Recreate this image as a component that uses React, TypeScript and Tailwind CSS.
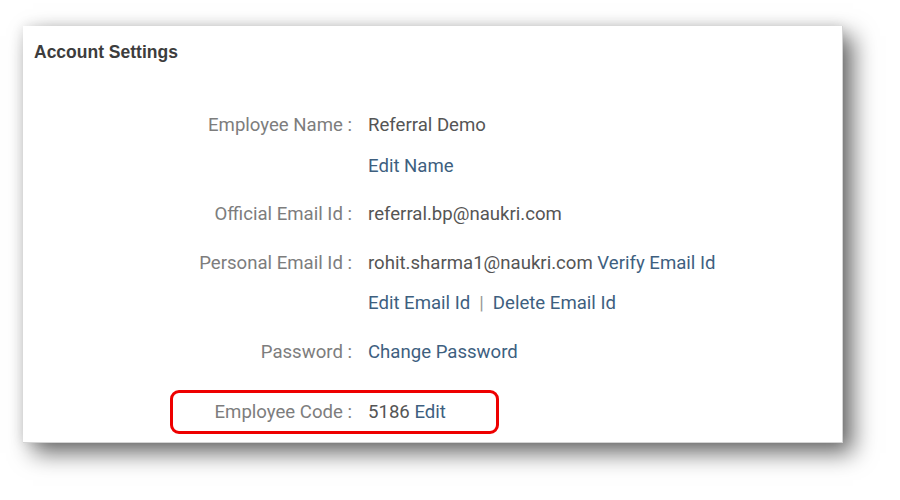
const rowLabel = 'text-right text-[#7d7d7d]';
const link = 'text-[#3e5f7f]';

function Row({ label, children }: { label?: string; children: React.ReactNode }) {
  return (
    <div className="grid h-[40px] grid-cols-[329px_1fr] items-center gap-4">
      <span className={rowLabel}>{label ?? ''}</span>
      <span className="text-[#555]">{children}</span>
    </div>
  );
}

export default function App() {
  return (
    <div className="h-[500px] w-[900px] bg-white pt-[26px] pl-[23px]">
      <div
        className="h-[417px] w-[820px] border-r border-b border-[#d4d4d4] bg-white shadow-[10px_10px_22px_rgba(0,0,0,0.58),0_0_12px_rgba(0,0,0,0.1)]"
        style={{ fontFamily: 'Roboto, "Noto Sans", sans-serif' }}
      >
        <h2
          className="h-[24px] pt-[14px] pl-[11px] text-[17.5px] leading-[24px] font-bold text-[#3d3d3d]"
          style={{ fontFamily: '"Liberation Sans", Arial, sans-serif', boxSizing: 'content-box' }}
        >
          Account Settings
        </h2>

        <div className="mt-[42px] text-[18.6px]">
          <Row label="Employee Name :">Referral Demo</Row>
          <div className="mt-[1px]">
            <Row>
              <span className={link}>Edit Name</span>
            </Row>
          </div>

          <div className="mt-[8px]">
            <Row label="Official Email Id :">referral.bp@naukri.com</Row>
          </div>

          <div className="mt-[9px]">
            <Row label="Personal Email Id :">
              rohit.sharma1@naukri.com <span className={link}>Verify Email Id</span>
            </Row>
            <Row>
              <span className={link}>Edit Email Id</span>
              <span className="mx-[9px] text-[#999]">|</span>
              <span className={link}>Delete Email Id</span>
            </Row>
          </div>

          <div className="mt-[9px]">
            <Row label="Password :">
              <span className={link}>Change Password</span>
            </Row>
          </div>

          {/* annotation box drawn over the last row */}
          <div className="relative mt-[20px]">
            <Row label="Employee Code :">
              5186 <span className={link}>Edit</span>
            </Row>
            <div className="pointer-events-none absolute top-[-3px] left-[147px] h-[44px] w-[329px] rounded-[9px] border-[3.5px] border-[#ee0000]" />
          </div>
        </div>
      </div>
    </div>
  );
}
